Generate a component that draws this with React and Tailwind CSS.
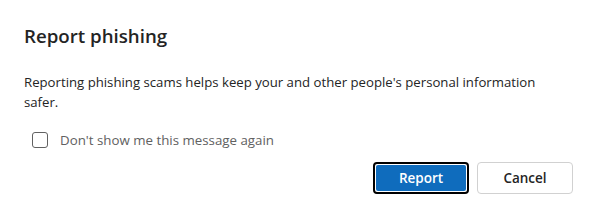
import React from 'react';

export default function App() {
    return (
        <div className="w-[591px] h-[209px] bg-white text-[#242424] font-['Segoe_UI','Open_Sans',sans-serif]">
            <div className="pl-6 pr-[18px] pt-[22px]">
                <h2 className="text-[18.7px] leading-[28px] font-semibold">Report phishing</h2>

                <p className="mt-[22px] text-[13.2px] leading-[20px]">
                    Reporting phishing scams helps keep your and other people's personal information safer.
                </p>

                {/* Checkbox row */}
                <label className="mt-[18px] ml-2 flex items-center gap-3 text-[13.3px] leading-[20px] text-[#616161]">
                    <span className="w-4 h-4 rounded-[3px] border border-[#616161] bg-white" />
                    Don't show me this message again
                </label>

                {/* Actions */}
                <div className="mt-[12px] flex justify-end gap-2">
                    <button className="w-24 h-8 rounded-[4px] border-2 border-black p-[1px]">
                        <span className="flex items-center justify-center w-full h-full rounded-[2px] bg-[#0f6cbd] text-white text-[13.5px] font-semibold">
                            Report
                        </span>
                    </button>
                    <button className="w-24 h-8 rounded-[4px] border border-[#d1d1d1] bg-white text-[13.5px] font-semibold text-[#242424]">
                        Cancel
                    </button>
                </div>
            </div>
        </div>
    );
}
